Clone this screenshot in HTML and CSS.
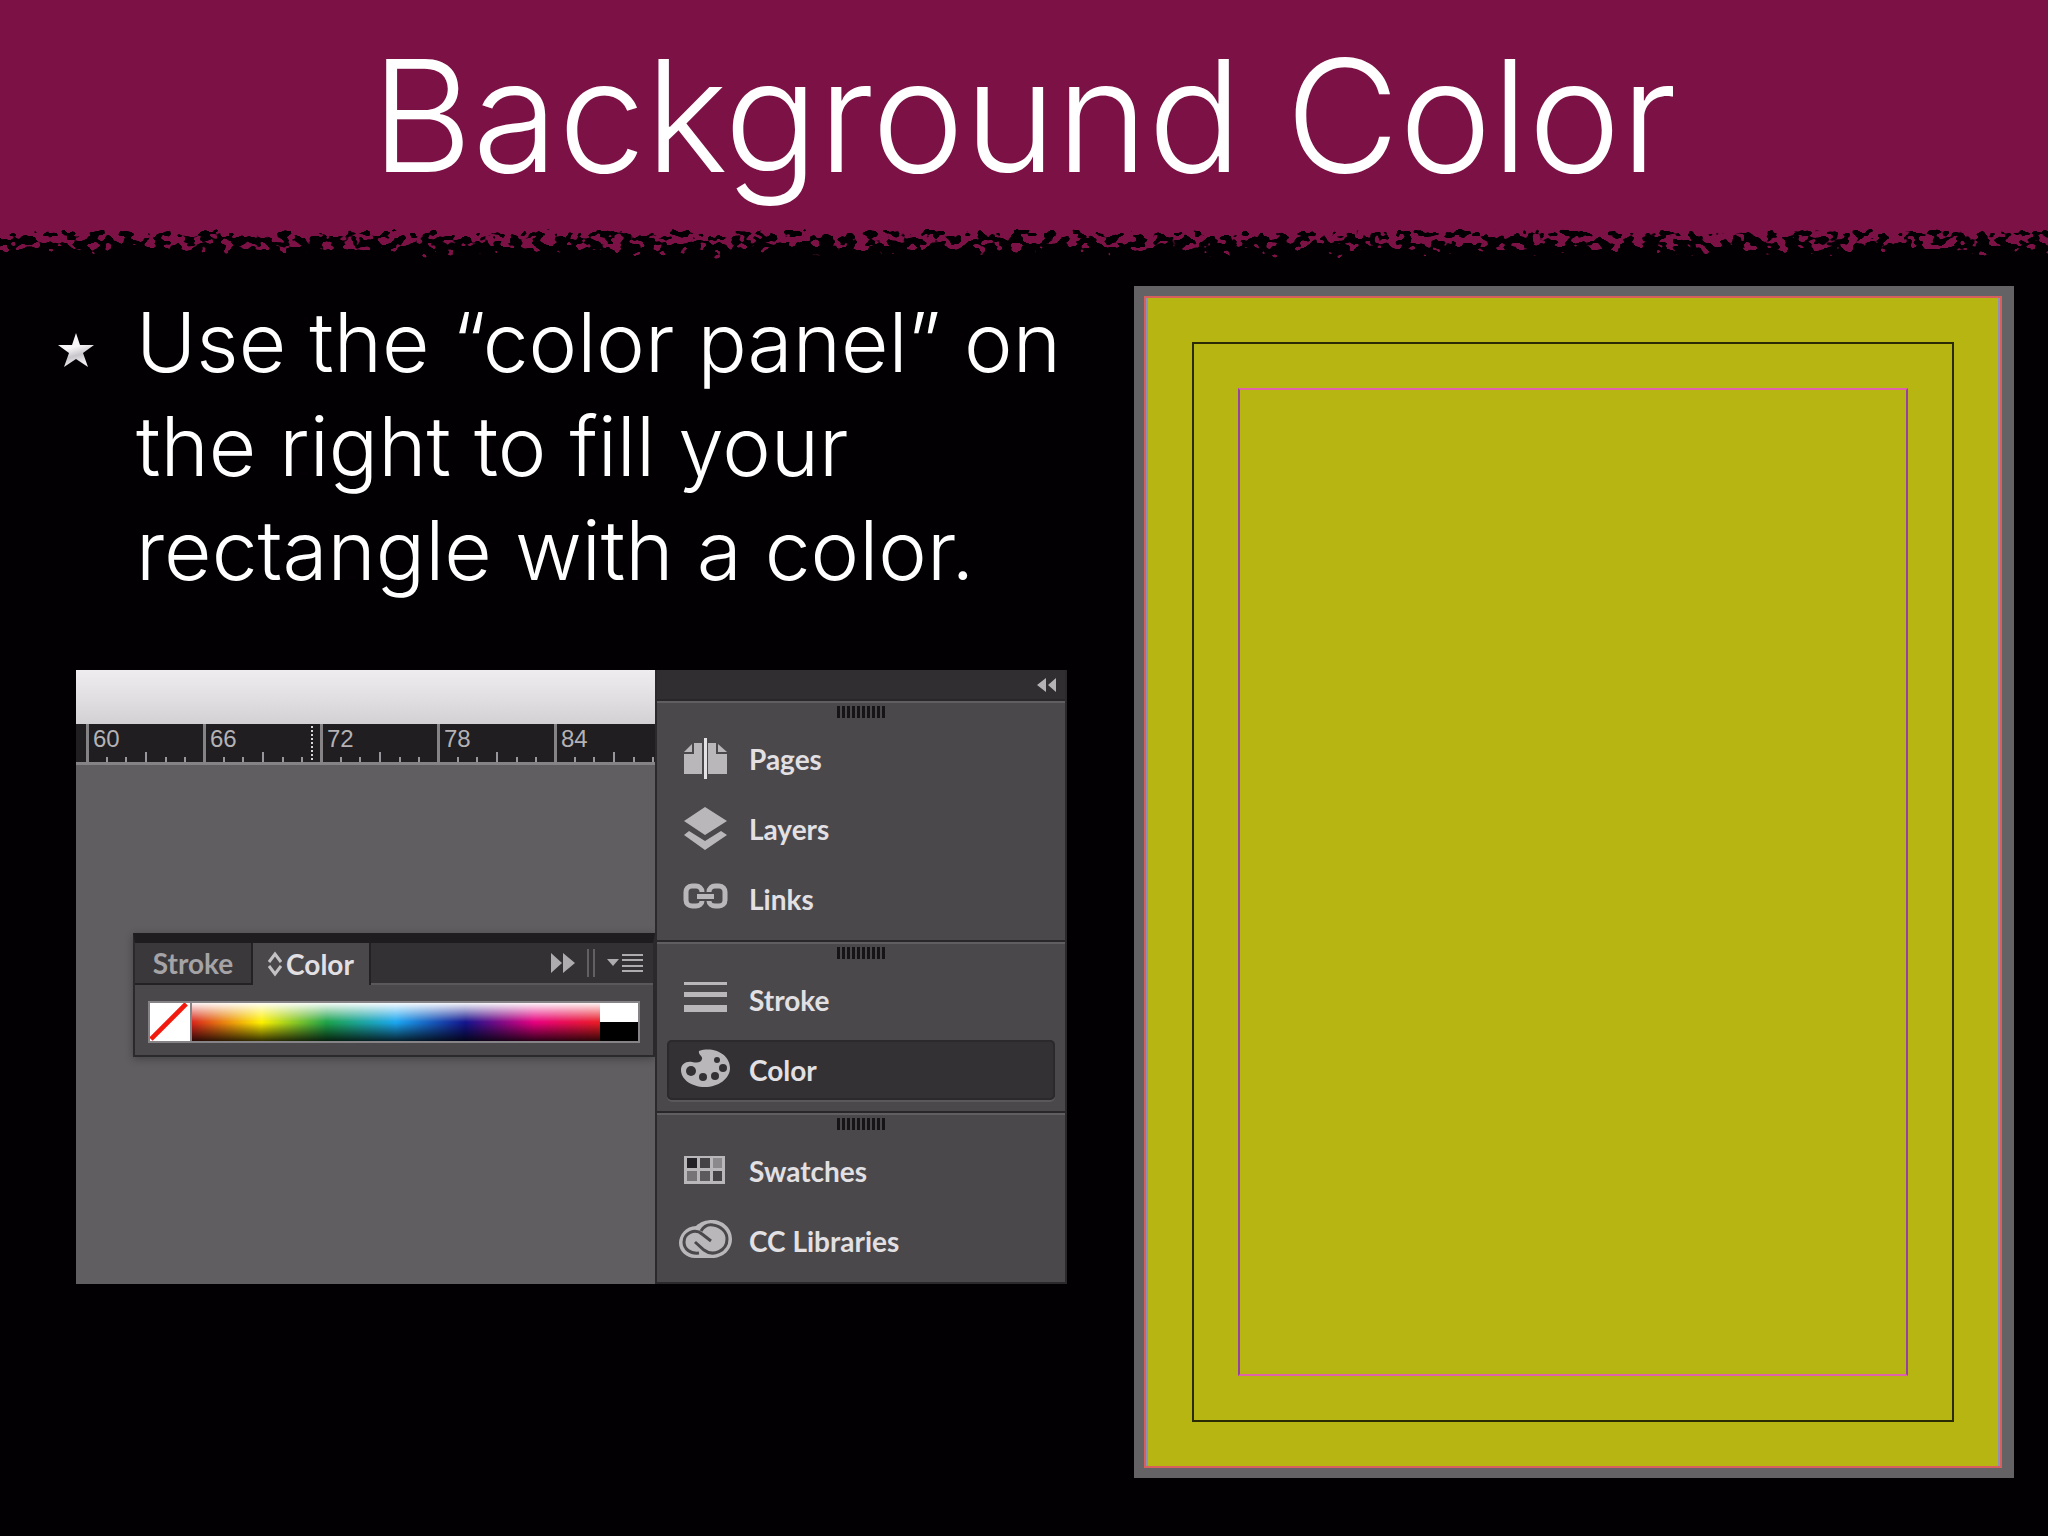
FILE: index.html
```html
<!DOCTYPE html>
<html lang="en">
<head>
  <meta charset="UTF-8" />
  <meta name="viewport" content="width=device-width, initial-scale=1.0"/>
  <title>Background Color</title>
  <link rel="stylesheet" href="styles.css">
</head>
<body>

  <header class="header">
    <h1>Background Color</h1>
    <!-- Torn edge -->
    <svg class="edge" width="100%" height="30" aria-hidden="true">
      <defs>
        <linearGradient id="fade" x1="0" y1="0" x2="0" y2="1">
          <stop offset="0" stop-color="#7b1145" stop-opacity="0.75"/>
          <stop offset="0.15" stop-color="#7b1145" stop-opacity="0.56"/>
          <stop offset="0.55" stop-color="#7b1145" stop-opacity="0.46"/>
          <stop offset="0.75" stop-color="#7b1145" stop-opacity="0.34"/>
          <stop offset="1" stop-color="#7b1145" stop-opacity="0.2"/>
        </linearGradient>
        <filter id="torn" x="0" y="0" width="100%" height="100%" color-interpolation-filters="sRGB">
          <feTurbulence type="fractalNoise" baseFrequency="0.09 0.13" numOctaves="2" seed="8" result="noise"/>
          <feComposite in="SourceGraphic" in2="noise" operator="arithmetic" k2="1" k3="1" k4="-1"/>
          <feColorMatrix values="0 0 0 0 0.482  0 0 0 0 0.067  0 0 0 0 0.271  0 0 0 30 0"/>
        </filter>
      </defs>
      <rect width="100%" height="30" fill="url(#fade)" filter="url(#torn)"/>
    </svg>
  </header>

  <main class="content">
    <section class="left">
      <ul class="bullets">
        <li>
          <svg class="star" viewBox="0 0 36 34" aria-hidden="true">
            <defs>
              <linearGradient id="silver" x1="0" y1="0" x2="0.3" y2="1">
                <stop offset="0.5" stop-color="#f8f6f9"/>
                <stop offset="0.75" stop-color="#c8c6ca"/>
                <stop offset="1" stop-color="#f0eef1"/>
              </linearGradient>
            </defs>
            <path d="M18 0l4 12h14L25 20l5 14-12-8-12 8 5-14L0 12h14z" fill="url(#silver)"/>
          </svg>
          <p>Use the “color panel” on the right to fill your rectangle with a color.</p>
        </li>
      </ul>

      <div class="app">
        <div class="canvas">
          <div class="toolbar"></div>
          <div class="ruler">
            <svg class="ticks-def" width="0" height="0" aria-hidden="true">
              <defs>
                <path id="ticks" d="M20 33v6M39 33v6M59 28v11M79 33v6M98 33v6"/>
              </defs>
            </svg>
            <div class="mark"><span>60</span><svg><use href="#ticks"/></svg></div>
            <div class="mark"><span>66</span><svg><use href="#ticks"/><path class="cursor" d="M108 2v38"/></svg></div>
            <div class="mark"><span>72</span><svg><use href="#ticks"/></svg></div>
            <div class="mark"><span>78</span><svg><use href="#ticks"/></svg></div>
            <div class="mark"><span>84</span><svg><use href="#ticks"/></svg></div>
          </div>

          <div class="panel">
            <div class="tabs">
              <button class="tab" type="button">Stroke</button>
              <button class="tab active" type="button">
                <svg width="14" height="26" viewBox="0 0 14 26" aria-hidden="true"><path d="M1 11l6-8 6 8M1 15l6 8 6-8" fill="none" stroke="#c4c2c5" stroke-width="3"/></svg>
                Color
              </button>
              <div class="tab-tools">
                <button type="button" aria-label="Collapse">
                  <svg width="24" height="20" viewBox="0 0 24 20"><path d="M0 0l11 10L0 20zM12 0l12 10-12 10z" fill="#aeacaf"/></svg>
                </button>
                <span class="divider"></span>
                <button type="button" aria-label="Panel menu">
                  <svg width="36" height="20" viewBox="0 0 36 20"><path d="M0 6h12L6 13z" fill="#aeacaf"/><path d="M15 2h21M15 7h21M15 13h21M15 18h21" stroke="#aeacaf" stroke-width="2"/></svg>
                </button>
              </div>
            </div>
            <div class="panel-body">
              <div class="spectrum">
                <svg class="none" viewBox="0 0 42 38" aria-hidden="true"><path d="M1 37L38 0" stroke="#f21a0c" stroke-width="5"/></svg>
                <div class="ramp"></div>
                <div class="bw"></div>
              </div>
            </div>
          </div>
        </div>

        <div class="dock">
          <div class="dock-top">
            <button type="button" aria-label="Collapse dock">
              <svg width="20" height="14" viewBox="0 0 20 14"><path d="M9 0v14L0 7zM19 0v14l-8-7z" fill="#b4b2b5"/></svg>
            </button>
          </div>

          <div class="group">
            <div class="grip"></div>
            <button class="item" type="button">
              <svg viewBox="0 0 56 44" aria-hidden="true">
                <path d="M17 6h9v31H7V17h10zM15 7v8H7zM39 6h-9v31h20V17H39zM41 7v8h9z"/>
                <path d="M25 1h6v41h-6z" fill="#4a484b"/>
                <path d="M27 1h3v41h-3z" fill="#e4e2e5"/>
              </svg>
              Pages
            </button>
            <button class="item" type="button">
              <svg viewBox="0 0 56 44" aria-hidden="true">
                <path d="M28 0l22 14-22 14L7 14zM12 24l16 10 16-10 6 4-22 15L7 28z"/>
              </svg>
              Layers
            </button>
            <button class="item" type="button">
              <svg viewBox="0 0 56 44" aria-hidden="true">
                <path d="M25 15c0-4-3-6-6-6h-4c-4 0-6 3-6 6v8c0 4 3 6 6 6h4c3 0 6-2 6-5M32 15c0-4 3-6 6-6h4c4 0 6 3 6 6v8c0 4-3 6-6 6h-4c-3 0-6-2-6-5" fill="none" stroke="#b9b7ba" stroke-width="5"/>
                <path d="M20 17h17v5H20z"/>
              </svg>
              Links
            </button>
          </div>

          <div class="group">
            <div class="grip"></div>
            <button class="item" type="button">
              <svg viewBox="0 0 56 44" aria-hidden="true">
                <path d="M7 4h43v3H7zM7 14h43v5H7zM7 27h43v7H7z"/>
              </svg>
              Stroke
            </button>
            <button class="item active" type="button">
              <svg viewBox="0 0 56 44" aria-hidden="true">
                <path d="M22 3c14-5 31 3 31 17 0 11-12 19-25 19C14 39 4 31 4 22c0-6 5-9 11-8 5 1 9 1 10-3 1-3-4-4-3-8z"/>
                <g fill="#333134"><circle cx="14" cy="23" r="5"/><circle cx="26" cy="29" r="4"/><circle cx="38" cy="28" r="4"/><circle cx="46" cy="20" r="4"/><circle cx="40" cy="12" r="3"/></g>
              </svg>
              Color
            </button>
          </div>

          <div class="group">
            <div class="grip"></div>
            <button class="item" type="button">
              <svg viewBox="0 0 56 44" aria-hidden="true">
                <path d="M7 7h41v28H7z"/>
                <path d="M10 9h10v10H10z" fill="#242226"/>
                <path d="M23 9h10v10H23zM36 22h9v10h-9z" fill="#454346"/>
                <path d="M36 9h9v10h-9z" fill="#8b898c"/>
                <path d="M10 22h10v10H10z" fill="#767477"/>
                <path d="M23 22h10v10H23z" fill="#5c5a5d"/>
              </svg>
              Swatches
            </button>
            <button class="item" type="button">
              <svg viewBox="0 0 56 44" aria-hidden="true">
                <path d="M19 7C23 3 29 1 35 1c11 0 20 8 20 19s-9 19-20 19H18C9 39 2 32 2 24S9 7 19 7z"/>
                <path d="M22 34c-9 1-15-4-15-11 0-9 11-14 18-8l9 7M24 12c3-5 7-7 12-6 8 1 14 7 14 14 0 12-14 18-23 11l-9-8" fill="none" stroke="#4a484b" stroke-width="3"/>
              </svg>
              CC Libraries
            </button>
          </div>
        </div>
      </div>
    </section>

    <section class="artboard">
      <div class="page">
        <div class="frame">
          <div class="margins"></div>
        </div>
      </div>
    </section>
  </main>

</body>
</html>
```
FILE: styles.css
```css
* {
  box-sizing: border-box;
}

body {
  margin: 0;
  min-height: 100vh;
  background: #020003;
  color: #fff;
  font-family: Inter, "Helvetica Neue", Arial, sans-serif;
}

button {
  padding: 0;
  border: 0;
  background: none;
  color: inherit;
  font: inherit;
  cursor: pointer;
}

svg {
  display: block;
}

.header {
  background: linear-gradient(#7b1145, #7b1145) no-repeat 0 0 / 100% calc(100% - 30px);
  padding-top: 20px;
}

.header h1 {
  margin: 0 0 17px;
  font-size: 156px;
  line-height: 192px;
  font-weight: 300;
  text-align: center;
}

.content {
  display: grid;
  grid-template-columns: 1076fr 880fr;
  padding: 27px 34px 58px 58px;
}

/* Left column */
.bullets {
  margin: 0;
  padding: 5px 40px 0 0;
  list-style: none;
}

.bullets li {
  display: flex;
  gap: 42px;
}

.bullets p {
  margin: 0;
  font-size: 82px;
  line-height: 104px;
  font-weight: 300;
}

.star {
  flex: none;
  width: 36px;
  height: 34px;
  margin-top: 42px;
}

.app {
  display: flex;
  width: 991px;
  margin: 67px 0 0 18px;
  font-family: Lato, "Liberation Sans", sans-serif;
  font-size: 28px;
  font-weight: 700;
  color: #e2e0e3;
}

.canvas {
  flex: 1;
  min-width: 0;
  background: #605e61;
}

.toolbar {
  height: 54px;
  background: linear-gradient(#efedf0, #d3d1d4);
}

.ruler {
  display: flex;
  height: 41px;
  padding-left: 10px;
  overflow: hidden;
  background: #201e21;
  border-bottom: 3px solid #858386;
}

.ticks-def {
  position: absolute;
}

.mark {
  position: relative;
  flex: none;
  width: 117px;
  border-left: 3px solid #858386;
  padding-left: 4px;
  font: 24px/30px "Liberation Sans", Arial, sans-serif;
  color: #b4b2b5;
}

.mark svg {
  position: absolute;
  left: -2px;
  bottom: 0;
  width: 117px;
  height: 38px;
  stroke: #98969a;
  stroke-width: 2;
}

.mark .cursor {
  stroke: #d8d6d9;
  stroke-dasharray: 2 2;
}

/* Floating color panel */
.panel {
  margin: 168px 0 0 57px;
  border: 2px solid #2b292c;
  border-top: 10px solid #1e1c1f;
  box-shadow: 0 2px 8px rgba(0, 0, 0, 0.3);
  background: #4a484b;
}

.tabs {
  display: flex;
  height: 42px;
  background: #333134;
}

.tab {
  display: flex;
  align-items: center;
  justify-content: center;
  gap: 4px;
  width: 118px;
  border-right: 2px solid #232124;
  border-bottom: 2px solid #232124;
  background: #3a383b;
  color: #a5a3a6;
}

.tab.active {
  border-bottom: 0;
  background: #4a484b;
  color: #e2e0e3;
}

.tab-tools {
  flex: 1;
  display: flex;
  align-items: center;
  justify-content: flex-end;
  gap: 12px;
  padding-right: 10px;
  border-bottom: 2px solid #5a585b;
}

.divider {
  width: 8px;
  height: 28px;
  border: solid #626063;
  border-width: 0 2px;
}

.panel-body {
  padding: 16px 13px 12px;
}

.spectrum {
  display: flex;
  height: 42px;
  border: 2px solid #858386;
}

.none {
  width: 42px;
  background: #fff;
  border-right: 2px solid #858386;
}

.ramp {
  flex: 1;
  background:
    linear-gradient(rgba(255, 255, 255, 0.95), rgba(255, 255, 255, 0) 50%, rgba(0, 0, 0, 0) 52%, rgba(0, 0, 0, 0.8)),
    linear-gradient(90deg, #d8261c, #fdf000 17%, #1da24a 33%, #1ba6f0 50%, #14148c 67%, #e6007e 84%, #ea1c24);
}

.bw {
  width: 38px;
  background: linear-gradient(#fff 50%, #000 50%);
}

/* Dock */
.dock {
  width: 412px;
  border: solid #2b292c;
  border-width: 0 2px 2px;
  background: #4a484b;
}

.dock-top {
  display: flex;
  justify-content: flex-end;
  align-items: center;
  height: 29px;
  padding-right: 8px;
  background: #302e31;
}

.group {
  display: flex;
  flex-direction: column;
  gap: 10px;
  padding: 5px 10px 11px;
  border-top: 2px solid #29272a;
  box-shadow: inset 0 2px #605e61;
}

.grip {
  align-self: center;
  width: 48px;
  height: 12px;
  margin-bottom: 1px;
  background: repeating-linear-gradient(90deg, #161417 0 3px, transparent 3px 5px);
}

.item {
  display: flex;
  align-items: center;
  gap: 16px;
  height: 60px;
  padding-left: 10px;
  border-radius: 5px;
}

.item svg {
  width: 56px;
  height: 44px;
  fill: #b9b7ba;
}

.item.active {
  background: #333134;
  box-shadow: inset 0 0 0 2px #2b292c, 0 2px #5a585b;
}

/* Page with the filled rectangle */
.artboard {
  display: flex;
  min-height: 1192px;
  padding: 10px 12px 10px 10px;
  background: #646265;
}

.page,
.frame {
  flex: 1;
  display: flex;
}

.page {
  padding: 44px 46px;
  border: 2px solid #d8605c;
  background: #b7b511;
  box-shadow: inset 2px 0 #8f92b8, inset -2px 0 #8f92b8;
}

.frame {
  padding: 44px;
  border: 2px solid #2a2a04;
}

.margins {
  flex: 1;
  border: 2px solid #e062a8;
  border-left-color: #9440a4;
  border-right-color: #9440a4;
}
```
